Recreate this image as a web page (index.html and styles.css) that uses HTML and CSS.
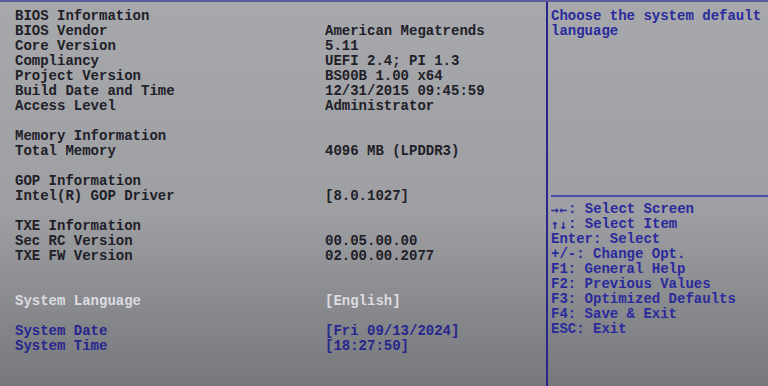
FILE: index.html
```html
<!DOCTYPE html>
<html lang="en">
<head>
    <meta charset="UTF-8">
    <meta name="viewport" content="width=device-width, initial-scale=1.0">
    <title>BIOS Setup - Main</title>
    <link rel="stylesheet" href="styles.css">
</head>
<body>
    <div id="screen">
        <div id="main">
            <div class="row"><span class="label">BIOS Information</span></div>
            <div class="row"><span class="label">BIOS Vendor</span><span class="value">American Megatrends</span></div>
            <div class="row"><span class="label">Core Version</span><span class="value">5.11</span></div>
            <div class="row"><span class="label">Compliancy</span><span class="value">UEFI 2.4; PI 1.3</span></div>
            <div class="row"><span class="label">Project Version</span><span class="value">BS00B 1.00 x64</span></div>
            <div class="row"><span class="label">Build Date and Time</span><span class="value">12/31/2015 09:45:59</span></div>
            <div class="row"><span class="label">Access Level</span><span class="value">Administrator</span></div>
            <div class="row"></div>
            <div class="row"><span class="label">Memory Information</span></div>
            <div class="row"><span class="label">Total Memory</span><span class="value">4096 MB (LPDDR3)</span></div>
            <div class="row"></div>
            <div class="row"><span class="label">GOP Information</span></div>
            <div class="row"><span class="label">Intel(R) GOP Driver</span><span class="value">[8.0.1027]</span></div>
            <div class="row"></div>
            <div class="row"><span class="label">TXE Information</span></div>
            <div class="row"><span class="label">Sec RC Version</span><span class="value">00.05.00.00</span></div>
            <div class="row"><span class="label">TXE FW Version</span><span class="value">02.00.00.2077</span></div>
            <div class="row"></div>
            <div class="row"></div>
            <div class="row selected"><span class="label">System Language</span><span class="value">[English]</span></div>
            <div class="row"></div>
            <div class="row option"><span class="label">System Date</span><span class="value">[Fri 09/13/2024]</span></div>
            <div class="row option"><span class="label">System Time</span><span class="value">[18:27:50]</span></div>
        </div>
        <div id="side">
            <div id="help">
                <div class="row">Choose the system default</div>
                <div class="row">language</div>
            </div>
            <div id="keys">
                <div class="row"><span class="arrow">→←</span>: Select Screen</div>
                <div class="row"><span class="arrow">↑↓</span>: Select Item</div>
                <div class="row">Enter: Select</div>
                <div class="row">+/-: Change Opt.</div>
                <div class="row">F1: General Help</div>
                <div class="row">F2: Previous Values</div>
                <div class="row">F3: Optimized Defaults</div>
                <div class="row">F4: Save &amp; Exit</div>
                <div class="row">ESC: Exit</div>
            </div>
        </div>
    </div>
</body>
</html>
```

FILE: styles.css
```css
html, body {
    margin: 0;
    padding: 0;
    height: 100%;
}
body {
    font-family: "Liberation Mono", "DejaVu Sans Mono", monospace;
    font-size: 14px;
    font-weight: bold;
    color: #202028;
    background: linear-gradient(to bottom, #a7a8ac 0%, #9e9fa3 55%, #77787c 100%);
    overflow: hidden;
}
#screen {
    display: flex;
    height: 100vh;
    box-sizing: border-box;
    border-top: 2px solid #5a5a9c;
}
#main {
    width: 546px;
    flex-shrink: 0;
    padding: 7px 0 0 15px;
    box-sizing: border-box;
}
.row {
    display: grid;
    grid-template-columns: 310px auto;
    height: 15px;
    line-height: 15px;
    white-space: pre;
}
.selected {
    color: #dcdce2;
}
.option {
    color: #26268e;
}
#side {
    flex: 1;
    border-left: 2px solid #26268e;
    padding: 7px 0 0 3px;
    color: #2a2a9c;
}
#side .row {
    display: block;
}
#help {
    height: 186px;
    border-bottom: 2px solid #4a4aa8;
}
#keys {
    padding-top: 5px;
}
.arrow {
    display: inline-block;
    width: 17px;
    height: 15px;
    line-height: 15px;
    vertical-align: top;
    font-family: "DejaVu Sans Mono", monospace;
    font-size: 13px;
    letter-spacing: 0.6px;
}
```
